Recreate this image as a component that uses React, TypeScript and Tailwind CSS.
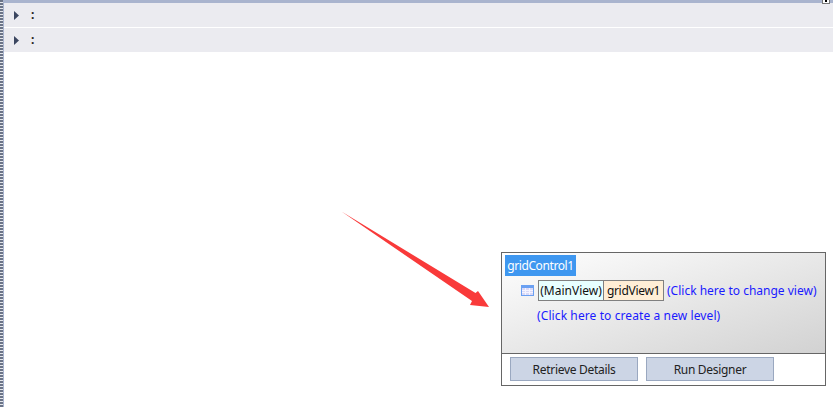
const font = 'font-["Noto_Sans",sans-serif]';

function GroupRow() {
    return (
        <div className="h-6 bg-[#ebebf0] flex items-center pl-[10px] gap-[12px]">
            <svg width="5" height="9" viewBox="0 0 5 9" className="shrink-0">
                <path d="M0 0 L5 4.5 L0 9 Z" fill="#3b4660" />
            </svg>
            <span className="text-[12px] font-bold text-[#222] leading-none">:</span>
        </div>
    );
}

function TableIcon() {
    return (
        <svg width="13" height="11" viewBox="0 0 13 11" className="shrink-0">
            <rect x="0" y="0" width="13" height="11" fill="#6aa0f2" />
            <rect x="1" y="3" width="11" height="7" fill="#d9d9f8" />
            {[4, 8].map(x => <rect key={x} x={x} y="3" width="1" height="7" fill="#f4f4ff" />)}
            {[5, 7].map(y => <rect key={y} x="1" y={y} width="11" height="1" fill="#f4f4ff" />)}
        </svg>
    );
}

export default function App() {
    return (
        <div className={`relative w-[833px] h-[407px] bg-white overflow-hidden ${font} text-[12px]`}>
            <div className="h-[3px] bg-[#a9b4ce]" />
            <div className="pl-[4px]">
                <GroupRow />
                <div className="h-px bg-white" />
                <GroupRow />
            </div>

            {/* ladder on the left edge of the design surface */}
            <div className="absolute left-0 top-0 bottom-0 w-[3px] bg-[repeating-linear-gradient(to_bottom,#6b7488_0px,#6b7488_2px,#e4e6ea_2px,#e4e6ea_3px)]" />
            <div className="absolute left-[3px] top-0 bottom-0 w-px bg-[#a9b4ce]" />
            <div className="absolute left-[822px] top-0 w-[8px] h-[4px] bg-white border border-t-0 border-[#777] flex justify-center">
                <div className="w-[2px] h-[2px] bg-black" />
            </div>

            <svg width="170" height="125" viewBox="0 0 170 125" className="absolute left-[330px] top-[200px]">
                <path d="M11.5 11.5 L145.5 93 L148 91 L159 107 L140 105 L142 101 Z" fill="#f93a3a" />
            </svg>

            <div className="absolute left-[501px] top-[252px] w-[325px] h-[134px] border border-[#666] bg-white flex flex-col">
                <div className="h-[101px] border-b border-[#666] bg-gradient-to-br from-white to-[#d2d2d2] pt-[2px] pl-[3px]">
                    <div className="w-[71px] h-[21px] bg-[#3e97f0] text-white flex items-center justify-center tracking-[-0.4px]">gridControl1</div>
                    <div className="flex items-center mt-[4px] pl-[16px]">
                        <TableIcon />
                        <div className="ml-[4px] flex h-[21px] border border-[#808080]">
                            <div className="bg-[#e8ffff] text-[#111] w-[65px] flex items-center justify-center border-r border-[#808080]">(MainView)</div>
                            <div className="bg-[#ffeed6] text-[#111] w-[59px] flex items-center justify-center tracking-[-0.3px]">gridView1</div>
                        </div>
                        <span className="ml-[3px] text-[#1a1aff]">(Click here to change view)</span>
                    </div>
                    <div className="mt-[6px] pl-[32px] text-[#1a1aff] tracking-[0.1px]">(Click here to create a new level)</div>
                </div>
                <div className="flex gap-2 pl-2 pt-[3px]">
                    <button className="w-[128px] h-[24px] pt-px bg-[#ccd5e5] border border-[#9aa8c0] text-[#222] tracking-[-0.3px]">Retrieve Details</button>
                    <button className="w-[128px] h-[24px] pt-px bg-[#ccd5e5] border border-[#9aa8c0] text-[#222] tracking-[-0.3px]">Run Designer</button>
                </div>
            </div>
        </div>
    );
}
